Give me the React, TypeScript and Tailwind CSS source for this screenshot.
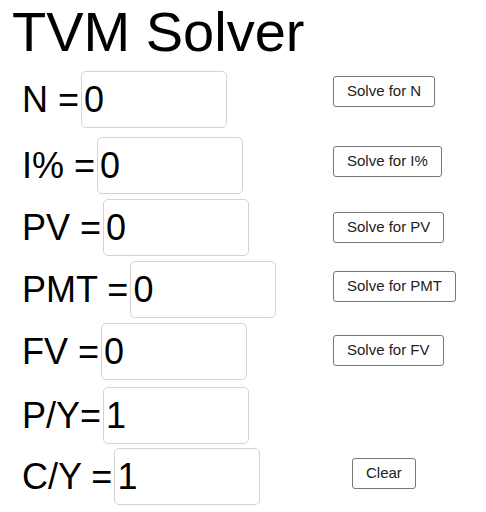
const rows = [
  { label: "N =", value: "0", button: "Solve for N", mt: "mt-0", btnMt: "mt-[5px]", btnMl: "ml-0" },
  { label: "I% =", value: "0", button: "Solve for I%", mt: "mt-[9px]", btnMt: "mt-[9px]", btnMl: "ml-0" },
  { label: "PV =", value: "0", button: "Solve for PV", mt: "mt-[5px]", btnMt: "mt-[13px]", btnMl: "ml-0" },
  { label: "PMT =", value: "0", button: "Solve for PMT", mt: "mt-[5px]", btnMt: "mt-[10px]", btnMl: "ml-0" },
  { label: "FV =", value: "0", button: "Solve for FV", mt: "mt-[5px]", btnMt: "mt-[12px]", btnMl: "ml-0" },
  { label: "P/Y=", value: "1", button: "", mt: "mt-[7px]", btnMt: "mt-0", btnMl: "ml-0" },
  { label: "C/Y =", value: "1", button: "Clear", mt: "mt-[4px]", btnMt: "mt-[10px]", btnMl: "ml-[19px]" },
];

export default function App() {
  return (
    <div className="min-h-[512px] w-[486px] bg-white text-black" style={{ fontFamily: '"Liberation Sans", Arial, sans-serif' }}>
      <h1 className="pl-[12px] pt-[4px] text-[56px] leading-[56px] font-normal">TVM Solver</h1>
      <div className="mt-[11px] flex flex-col">
        {rows.map((r) => (
          <div key={r.label} className={`flex items-start ${r.mt}`}>
            <div className="flex w-[333px] items-center pl-[22px]">
              <span className="text-[36px] leading-none whitespace-pre">{r.label}</span>
              <input
                readOnly
                value={r.value}
                className="ml-[2px] h-[57px] w-[146px] rounded-[5px] border border-[#d4d4d4] bg-white px-[2px] text-[36px] text-black outline-none"
                style={{ fontFamily: '"Liberation Sans", Arial, sans-serif' }}
              />
            </div>
            {r.button && (
              <button
                type="button"
                className={`${r.btnMt} ${r.btnMl} h-[31px] rounded-[3px] border border-[#767676] bg-white px-[13px] text-[15px] text-[#222]`}
                style={{ fontFamily: '"Liberation Sans", Arial, sans-serif' }}
              >
                {r.button}
              </button>
            )}
          </div>
        ))}
      </div>
    </div>
  );
}
